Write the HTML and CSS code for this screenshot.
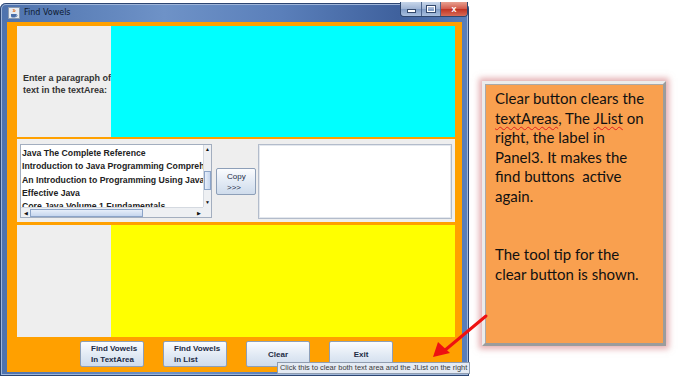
FILE: index.html
```html
<!DOCTYPE html>
<html lang="en">

<head>
    <meta charset="UTF-8">
    <title>Find Vowels</title>
    <link rel="stylesheet" href="styles.css">
</head>

<body>

    <div class="window">
        <div class="titlebar">
            <svg class="java-icon" width="12" height="12" viewBox="0 0 12 12">
                <rect x="0.5" y="0.5" width="11" height="11" fill="#e8ecf2" stroke="#8a9ab0"/>
                <path d="M3 7 h5 v2 a1.5 1.5 0 0 1 -1.5 1.5 h-2 a1.5 1.5 0 0 1 -1.5 -1.5 z" fill="#4a6ea8"/>
                <path d="M8 7.5 a1 1 0 0 1 0 2" fill="none" stroke="#4a6ea8"/>
                <path d="M5 2 q1.5 1.5 0 3 M6.5 2.5 q1 1 0 2.5" fill="none" stroke="#e06a1a" stroke-width="0.9"/>
            </svg>
            <span class="title">Find Vowels</span>
            <div class="controls">
                <div class="ctl ctl-min"><span></span></div>
                <div class="ctl ctl-max"><span></span></div>
                <div class="ctl ctl-close">x</div>
            </div>
        </div>

        <div class="content">
            <div class="panel panel-top">
                <div class="label-cell">Enter a paragraph of<br>text in the textArea:</div>
                <div class="fill cyan"></div>
            </div>

            <div class="panel panel-mid">
                <div class="list">
                    <div class="list-items">
                        <div>Java The Complete Reference</div>
                        <div>Introduction to Java Programming Comprehensive</div>
                        <div>An Introduction to Programming Using Java</div>
                        <div>Effective Java</div>
                        <div>Core Java Volume 1 Fundamentals</div>
                    </div>
                    <div class="vscroll">
                        <div class="arrow">&#9650;</div>
                        <div class="vtrack"><div class="vthumb"></div></div>
                        <div class="arrow">&#9660;</div>
                    </div>
                    <div class="hscroll">
                        <div class="arrow">&#9664;</div>
                        <div class="htrack"><div class="hthumb"></div></div>
                        <div class="arrow">&#9654;</div>
                    </div>
                    <div class="corner"></div>
                </div>
                <button class="btn btn-copy">Copy<br>&gt;&gt;&gt;</button>
                <div class="textarea"></div>
            </div>

            <div class="panel panel-bottom">
                <div class="gray-cell"></div>
                <div class="fill yellow"></div>
            </div>

            <div class="buttons">
                <button class="btn btn-left">Find Vowels<br>In TextArea</button>
                <button class="btn btn-left">Find Vowels<br>in List</button>
                <button class="btn">Clear</button>
                <button class="btn">Exit</button>
            </div>
        </div>
    </div>

    <div class="tooltip">Click this to clear both text area and the JList on the right</div>

    <svg class="pointer" width="70" height="60" viewBox="0 0 70 60">
        <line x1="56" y1="4" x2="14" y2="39" stroke="#ee1111" stroke-width="3" stroke-linecap="round"/>
        <polygon points="3,45 8,30 20,41" fill="#ee1111"/>
    </svg>

    <div class="note">
        <div class="note-box">
            Clear button clears the<br>
            <span class="spell">textAreas</span>, The <span class="spell">JList</span> on<br>
            right, the label in<br>
            Panel3. It makes the<br>
            find buttons&nbsp; active<br>
            again.<br>
            <br>
            <br>
            The tool tip for the<br>
            clear button is shown.
        </div>
    </div>

</body>

</html>
```

FILE: styles.css
```css
body {
    margin: 0;
    background: white;
    display: flex;
    align-items: flex-start;
    font-family: "Liberation Sans", Arial, sans-serif;
}

.window {
    margin-top: 3px;
    width: 455px;
    padding: 0 7px 4px 7px;
    border-radius: 6px 6px 0 0;
    background: linear-gradient(90deg, #4e72ad, #6e92c7 35%, #5a7fba 60%, #3f619d 85%, #5b80bb);
    box-shadow: inset 0 0 0 1px #2d4672, inset 0 0 0 2px #9fb6da;
}

.titlebar {
    height: 19px;
    display: flex;
    align-items: center;
    position: relative;
}

.java-icon {
    margin: 0 4px 0 1px;
}

.title {
    font-family: "DejaVu Sans", sans-serif;
    font-size: 8px;
    color: #0e1a30;
}

.controls {
    position: absolute;
    right: -6px;
    top: -1px;
    display: flex;
    border: 1px solid #2e476e;
    border-top: none;
    border-radius: 0 0 4px 4px;
    overflow: hidden;
}

.ctl {
    height: 14px;
    display: flex;
    align-items: center;
    justify-content: center;
    background: linear-gradient(#c7d6ea, #9db3d3 50%, #7f9cc6 51%, #a9c0df);
    border-right: 1px solid #4c6690;
}

.ctl-min {
    width: 20px;
}

.ctl-min span {
    width: 7px;
    height: 2px;
    background: white;
    border: 1px solid #33496c;
    margin-top: 4px;
}

.ctl-max {
    width: 18px;
}

.ctl-max span {
    width: 6px;
    height: 4px;
    border: 1px solid white;
    outline: 1px solid #33496c;
}

.ctl-close {
    width: 26px;
    border-right: none;
    background: linear-gradient(#e8a090, #d2584a 50%, #c03323 51%, #d86a55);
    color: white;
    font-size: 9px;
    font-weight: bold;
}

.content {
    height: 346px;
    padding: 4px 7px 0 10px;
    background: #ffa000;
    display: flex;
    flex-direction: column;
}

.panel {
    display: flex;
    background: #eeeeee;
}

.panel-top {
    height: 111px;
    margin-bottom: 2px;
}

.label-cell {
    width: 88px;
    padding: 46px 0 0 6px;
    font-size: 9px;
    font-weight: bold;
    line-height: 12px;
    color: #333333;
    white-space: nowrap;
    overflow: hidden;
}

.fill {
    flex: 1;
}

.cyan {
    background: #00ffff;
}

.yellow {
    background: #ffff00;
}

.panel-mid {
    height: 83px;
    margin-bottom: 3px;
    padding: 5px 3px 0 3px;
    box-sizing: border-box;
    align-items: flex-start;
}

.list {
    width: 190px;
    height: 72px;
    border: 1px solid #a3aebf;
    background: white;
    display: grid;
    grid-template-columns: 1fr 8px;
    grid-template-rows: 1fr 10px;
    overflow: hidden;
}

.list-items {
    font-size: 8.7px;
    font-weight: bold;
    line-height: 13.3px;
    color: #222222;
    padding: 2px 0 0 1px;
    white-space: nowrap;
    overflow: hidden;
}

.vscroll {
    display: flex;
    flex-direction: column;
    background: #eef0f3;
    border-left: 1px solid #d4d9e0;
}

.arrow {
    font-size: 5px;
    line-height: 9px;
    height: 9px;
    text-align: center;
    color: #111111;
}

.vtrack {
    flex: 1;
    padding-top: 17px;
}

.vthumb {
    height: 19px;
    background: linear-gradient(90deg, #e6eefa, #c6d6ee);
    border: 1px solid #8ca4c8;
    box-sizing: border-box;
}

.hscroll {
    display: flex;
    background: #eef0f3;
    border-top: 1px solid #d4d9e0;
}

.hscroll .arrow {
    width: 9px;
    line-height: 10px;
}

.htrack {
    flex: 1;
    padding: 1px 0 0 0;
}

.hthumb {
    width: 113px;
    height: 8px;
    background: linear-gradient(#e6eefa, #c6d6ee);
    border: 1px solid #8ca4c8;
    box-sizing: border-box;
}

.corner {
    background: #eef0f3;
}

.btn {
    font-family: "Liberation Sans", Arial, sans-serif;
    font-size: 8px;
    font-weight: bold;
    line-height: 11px;
    color: #1d2b44;
    background: linear-gradient(#fbfcfe, #e3ebf5 50%, #cfdcec);
    border: 1px solid #8d9fb8;
    border-radius: 2px;
    padding: 0;
}

.btn-copy {
    width: 40px;
    height: 27px;
    margin: 24px 2px 0 4px;
    text-align: left;
    padding-left: 10px;
    font-weight: normal;
}

.textarea {
    width: 192px;
    height: 73px;
    border: 1px solid #b3bccb;
    box-shadow: inset 0 0 0 1px #e4e8ee;
    background: white;
}

.panel-bottom {
    height: 112px;
}

.gray-cell {
    width: 94px;
}

.buttons {
    flex: 1;
    display: flex;
    justify-content: center;
    gap: 19px;
    padding: 4px 0 0 1px;
    align-items: flex-start;
}

.buttons .btn {
    width: 64px;
    height: 26px;
}

.btn-left {
    text-align: left;
    padding-left: 10px;
}

.tooltip {
    position: absolute;
    left: 277px;
    top: 362px;
    width: 189px;
    height: 10px;
    background: #e4eaf3;
    border: 1px solid #8f9caf;
    font-family: "Liberation Sans", Arial, sans-serif;
    font-size: 7.45px;
    line-height: 10px;
    color: #3b3b3b;
    padding-left: 2px;
    white-space: nowrap;
    overflow: hidden;
}

.pointer {
    position: absolute;
    left: 430px;
    top: 312px;
}

.note {
    margin: 81px 0 0 13px;
}

.note-box {
    width: 168px;
    height: 254px;
    padding: 5px 0 0 10px;
    background: #f9a04f;
    border: 3px solid;
    border-color: #ececec #9c9c9c #9c9c9c #ececec;
    box-shadow: 0 0 6px 3px rgba(205, 110, 115, 0.55), inset 1px 1px 0 #a9a9a9;
    font-family: Lato, "Open Sans", sans-serif;
    font-size: 15px;
    line-height: 19.5px;
    color: #111111;
    white-space: nowrap;
}

.spell {
    text-decoration: underline wavy #e02020;
    text-decoration-thickness: 1px;
    text-underline-offset: 2px;
}
```
